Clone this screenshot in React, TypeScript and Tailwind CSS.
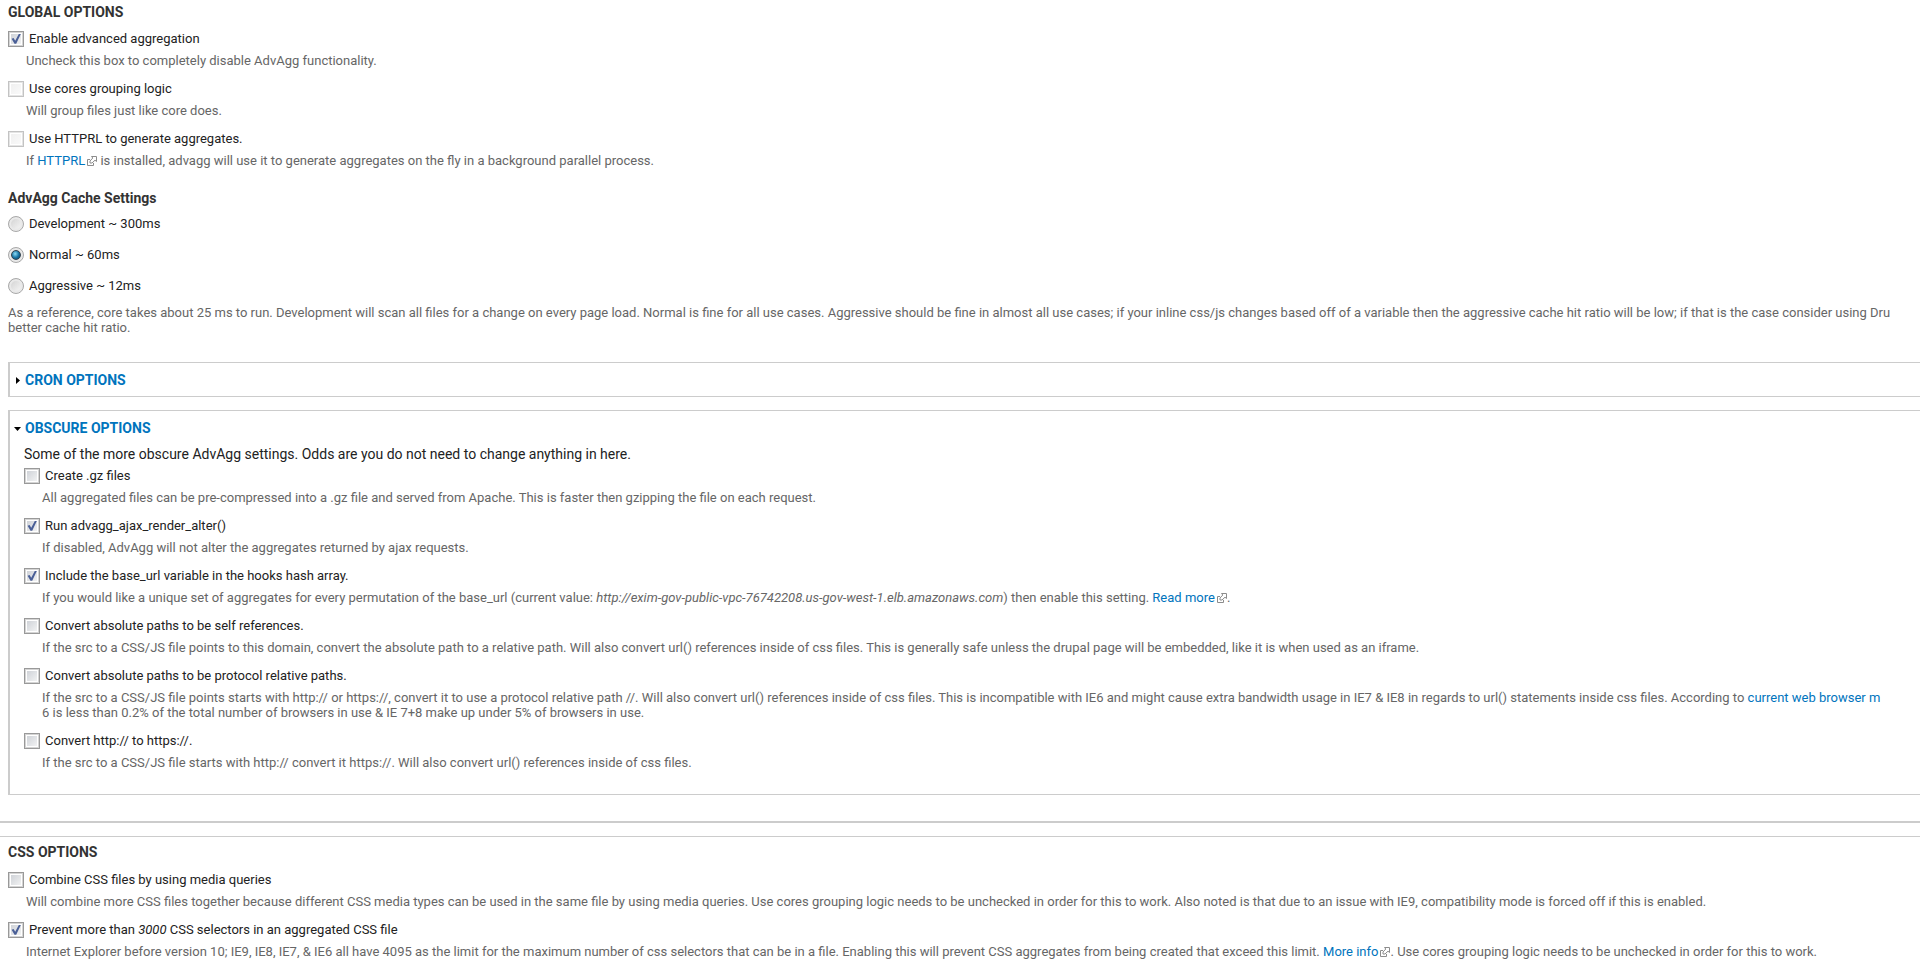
import { useState, type ReactNode } from 'react';
import clsx from 'clsx';

interface CheckOptionProps {
  id: string;
  label: ReactNode;
  children: ReactNode;
  defaultChecked?: boolean;
  muted?: boolean;
}

function ExtLink({ children, external = true }: { children: ReactNode; external?: boolean }) {
  return (
    <a href="#" className="text-[#0074bd] hover:underline">
      {children}
      {external && (
        <svg className="ml-0.5 inline-block align-[-1px]" width="10" height="10" viewBox="0 0 10 10" fill="none" stroke="#8c8c8c">
          <path d="M3 3.5H0.5v6h6V7" />
          <path d="M4.5 0.5h5v5L8 4.2L5 7H3V5L5.8 2z" />
        </svg>
      )}
    </a>
  );
}

function CheckOption({ id, label, children, defaultChecked, muted }: CheckOptionProps) {
  return (
    <div>
      <div className="flex h-4 items-center gap-[5px]">
        <span className="relative flex size-4 shrink-0">
          <input
            id={id}
            type="checkbox"
            defaultChecked={defaultChecked}
            aria-describedby={`${id}-desc`}
            className={clsx(
              'peer size-4 appearance-none border bg-linear-to-br bg-clip-content p-0.5',
              muted
                ? 'border-[#c3c3c3] from-[#eeeeee] to-[#fbfbfb] shadow-[inset_0_0_0_1px_#e4e4e4]'
                : 'border-[#999999] from-[#c9cdd3] to-[#f8f8f8] shadow-[inset_0_0_0_1px_#d4d4d4]'
            )}
          />
          <svg
            className="pointer-events-none absolute inset-0 hidden peer-checked:block"
            width="16"
            height="16"
            viewBox="0 0 16 16"
            fill="#4a5f97"
          >
            <path d="M3.6 7.8L5.6 7L7.2 9.8L10.8 3L12.8 3L8.2 12.8L6.5 12.8Z" />
          </svg>
        </span>
        <label htmlFor={id} className="text-[#222222]">
          {label}
        </label>
      </div>
      <p id={`${id}-desc`} className="mt-1.5 ml-[18px] leading-[15px] whitespace-nowrap text-[#666666]">
        {children}
      </p>
    </div>
  );
}

function Fieldset({ title, defaultOpen = false, children }: { title: string; defaultOpen?: boolean; children?: ReactNode }) {
  const [open, setOpen] = useState(defaultOpen);

  return (
    <section className="ml-2 border-y border-l-2 border-[#cccccc] pt-[9px] pb-2">
      <h3 className="flex">
        <button
          type="button"
          aria-expanded={open}
          onClick={() => setOpen(!open)}
          className="flex cursor-pointer items-center pl-1 text-sm leading-4 font-bold text-[#0074bd]"
        >
          <svg className="mr-1" width="7" height="7" viewBox="0 0 7 7">
            <path d={open ? 'M0 2H7L3.5 6Z' : 'M2 0V7L6 3.5Z'} />
          </svg>
          {title}
        </button>
      </h3>
      {open && <div className="mt-2 pb-4 pl-3.5">{children}</div>}
    </section>
  );
}

const cacheModes = [
  { value: 'development', label: 'Development ~ 300ms' },
  { value: 'normal', label: 'Normal ~ 60ms' },
  { value: 'aggressive', label: 'Aggressive ~ 12ms' },
];

export default function App() {
  return (
    <form className="overflow-hidden bg-white pb-3 font-[Roboto,'Open_Sans',sans-serif] text-[13px] leading-4">
      {/* Global options */}
      <section className="pt-1 pl-2">
        <h2 className="text-sm leading-4 font-bold text-[#333333]">GLOBAL OPTIONS</h2>
        <div className="mt-[11px] flex flex-col gap-[13px]">
          <CheckOption id="enabled" label="Enable advanced aggregation" defaultChecked>
            Uncheck this box to completely disable AdvAgg functionality.
          </CheckOption>
          <CheckOption id="core-groups" label="Use cores grouping logic" muted>
            Will group files just like core does.
          </CheckOption>
          <CheckOption id="use-httprl" label="Use HTTPRL to generate aggregates." muted>
            If <ExtLink>HTTPRL</ExtLink> is installed, advagg will use it to generate aggregates on the fly in a
            background parallel process.
          </CheckOption>
        </div>

        {/* Cache level */}
        <div role="radiogroup" aria-labelledby="cache-title" className="mt-[22px]">
          <h3 id="cache-title" className="text-sm leading-4 font-bold text-[#333333]">
            AdvAgg Cache Settings
          </h3>
          <div className="mt-2.5 flex flex-col gap-[15px]">
            {cacheModes.map((mode) => (
              <label key={mode.value} className="flex h-4 items-center gap-[5px] self-start text-[#222222]">
                <span className="relative flex size-4 shrink-0">
                  <input
                    type="radio"
                    name="cache-level"
                    value={mode.value}
                    defaultChecked={mode.value === 'normal'}
                    className="peer size-4 appearance-none rounded-full border border-[#a8a8a8] bg-linear-to-br from-[#cfcfcf] to-[#fafafa] shadow-[inset_0_0_0_2px_#e9e9e9]"
                  />
                  <span className="pointer-events-none absolute inset-[3px] hidden rounded-full border border-[#33434f] bg-radial-[at_40%_35%] from-[#8fdcf5] via-[#1b78a8] to-[#0b3d5e] peer-checked:block" />
                </span>
                {mode.label}
              </label>
            ))}
          </div>
          <p className="mt-[11px] leading-[15px] whitespace-nowrap text-[#666666]">
            As a reference, core takes about 25 ms to run. Development will scan all files for a change on every page
            load. Normal is fine for all use cases. Aggressive should be fine in almost all use cases; if your inline
            css/js changes based off of a variable then the aggressive cache hit ratio will be low; if that is the case
            consider using Dru
            <br />
            better cache hit ratio.
          </p>
        </div>
      </section>

      <div className="mt-[27px] flex flex-col gap-[13px]">
        <Fieldset title="CRON OPTIONS" />
        <Fieldset title="OBSCURE OPTIONS" defaultOpen>
          <p className="mb-1 text-sm leading-5 text-[#222222]">
            Some of the more obscure AdvAgg settings. Odds are you do not need to change anything in here.
          </p>
          <div className="flex flex-col gap-[13px]">
            <CheckOption id="gzip" label="Create .gz files">
              All aggregated files can be pre-compressed into a .gz file and served from Apache. This is faster then
              gzipping the file on each request.
            </CheckOption>
            <CheckOption id="ajax-render" label="Run advagg_ajax_render_alter()" defaultChecked>
              If disabled, AdvAgg will not alter the aggregates returned by ajax requests.
            </CheckOption>
            <CheckOption id="base-url" label="Include the base_url variable in the hooks hash array." defaultChecked>
              If you would like a unique set of aggregates for every permutation of the base_url (current value:{' '}
              <em>http://exim-gov-public-vpc-76742208.us-gov-west-1.elb.amazonaws.com</em>) then enable this setting.{' '}
              <ExtLink>Read more</ExtLink>.
            </CheckOption>
            <CheckOption id="self-refs" label="Convert absolute paths to be self references.">
              If the src to a CSS/JS file points to this domain, convert the absolute path to a relative path. Will also
              convert url() references inside of css files. This is generally safe unless the drupal page will be
              embedded, like it is when used as an iframe.
            </CheckOption>
            <CheckOption id="protocol-relative" label="Convert absolute paths to be protocol relative paths.">
              If the src to a CSS/JS file points starts with http:// or https://, convert it to use a protocol relative
              path //. Will also convert url() references inside of css files. This is incompatible with IE6 and might
              cause extra bandwidth usage in IE7 &amp; IE8 in regards to url() statements inside css files. According to{' '}
              <ExtLink external={false}>current web browser m</ExtLink>
              <br />6 is less than 0.2% of the total number of browsers in use &amp; IE 7+8 make up under 5% of browsers
              in use.
            </CheckOption>
            <CheckOption id="force-https" label="Convert http:// to https://.">
              If the src to a CSS/JS file starts with http:// convert it https://. Will also convert url() references
              inside of css files.
            </CheckOption>
          </div>
        </Fieldset>
      </div>

      <hr className="mt-[26px] border-t-2 border-[#cccccc]" />

      {/* CSS options */}
      <section className="mt-[13px] border-t border-[#cccccc] pt-[7px] pl-2">
        <h2 className="text-sm leading-4 font-bold text-[#333333]">CSS OPTIONS</h2>
        <div className="mt-3 flex flex-col gap-[13px]">
          <CheckOption id="combine-media" label="Combine CSS files by using media queries">
            Will combine more CSS files together because different CSS media types can be used in the same file by using
            media queries. Use cores grouping logic needs to be unchecked in order for this to work. Also noted is that
            due to an issue with IE9, compatibility mode is forced off if this is enabled.
          </CheckOption>
          <CheckOption
            id="selector-limit"
            label={<>Prevent more than <em>3000</em> CSS selectors in an aggregated CSS file</>}
            defaultChecked
          >
            Internet Explorer before version 10; IE9, IE8, IE7, &amp; IE6 all have 4095 as the limit for the maximum
            number of css selectors that can be in a file. Enabling this will prevent CSS aggregates from being created
            that exceed this limit. <ExtLink>More info</ExtLink>. Use cores grouping logic needs to be unchecked in order
            for this to work.
          </CheckOption>
        </div>
      </section>
    </form>
  );
}
